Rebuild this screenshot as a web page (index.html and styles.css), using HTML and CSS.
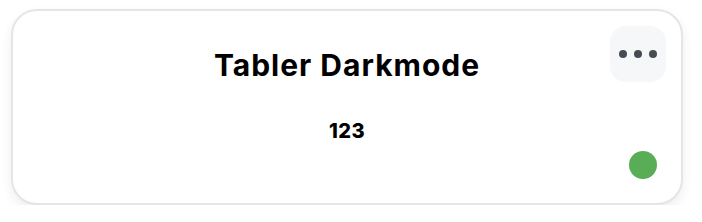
FILE: index.html
```html
<!DOCTYPE html>
<html lang="en">
<head>
  <meta charset="UTF-8">
  <meta name="viewport" content="width=device-width, initial-scale=1.0">
  <title>Tabler Darkmode</title>
  <link rel="stylesheet" href="styles.css">
</head>
<body>
  <div class="card">
    <h2 class="card-title">Tabler Darkmode</h2>
    <div class="card-count">123</div>

    <button class="card-menu" aria-label="more">
      <span></span><span></span><span></span>
    </button>
    <i class="card-status"></i>
  </div>
</body>
</html>
```

FILE: styles.css
```css
* {
  box-sizing: border-box;
}

body {
  margin: 0;
  padding: 9px 0 0 11px;
  background: #fff;
  font-family: Inter, "Noto Sans", sans-serif;
  color: #000;
}

.card {
  position: relative;
  width: 672px;
  height: 196px;
  border: 2px solid #e3e5e9;
  border-radius: 26px;
  background: #fff;
  box-shadow: 0 5px 12px rgba(0, 0, 0, .07);
  display: flex;
  flex-direction: column;
  align-items: center;
  padding-top: 36px;
}

.card-title {
  margin: 0;
  font-size: 30px;
  font-weight: 700;
  line-height: 36px;
  letter-spacing: 1px;
}

.card-count {
  margin-top: 36px;
  font-size: 20px;
  font-weight: 800;
  line-height: 24px;
  letter-spacing: 0.5px;
}

.card-menu {
  position: absolute;
  top: 15px;
  right: 15px;
  width: 56px;
  height: 56px;
  border: none;
  border-radius: 16px;
  background: #f6f7f9;
  display: flex;
  justify-content: center;
  align-items: center;
  gap: 7px;
  padding: 0;
  cursor: pointer;
}

.card-menu span {
  width: 8px;
  height: 8px;
  border-radius: 50%;
  background: #474c54;
}

.card-status {
  position: absolute;
  right: 24px;
  bottom: 24px;
  width: 28px;
  height: 28px;
  border-radius: 50%;
  background: #5aad57;
}
```
